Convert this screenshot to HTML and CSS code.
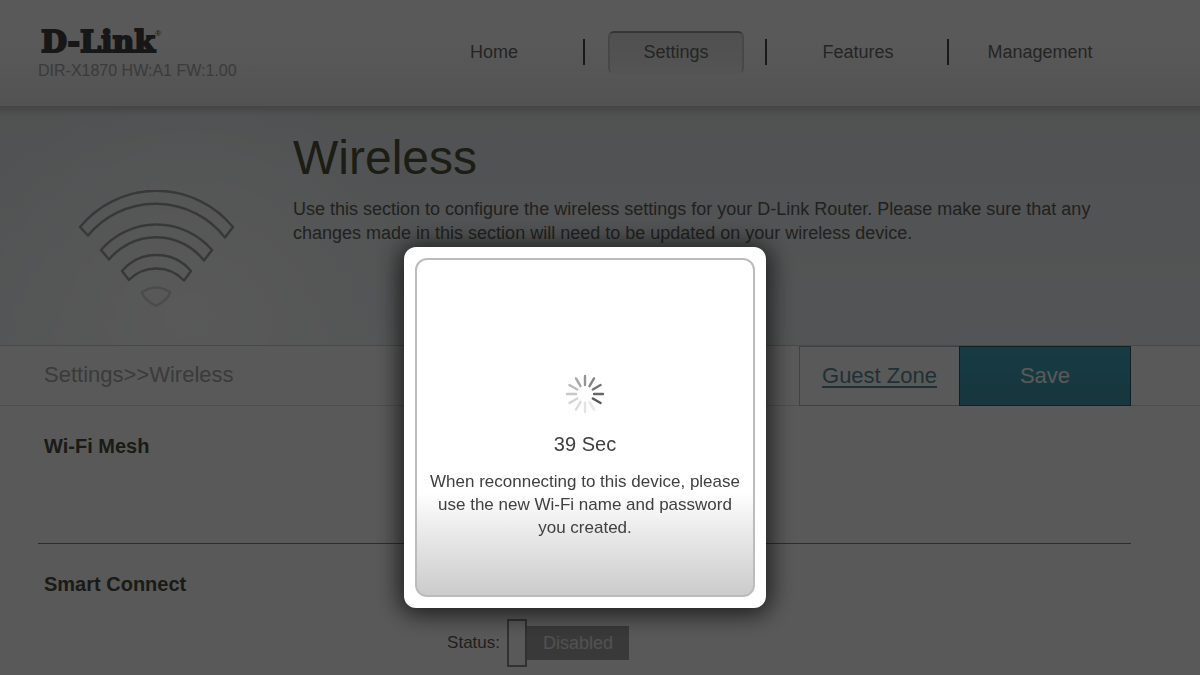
FILE: index.html
```
<!DOCTYPE html>
<html lang="en">
<head>
<meta charset="utf-8">
<meta name="viewport" content="width=device-width, initial-scale=1">
<title>D-Link - Wireless</title>
<link rel="stylesheet" href="styles.css">
</head>
<body>
<div class="page">
  <header class="header">
    <div class="brand">
      <div class="logo">D-Link<sup class="logo-mark">®</sup></div>
      <div class="model">DIR-X1870 HW:A1 FW:1.00</div>
    </div>
    <nav class="nav">
      <div class="nav-item"><a class="nav-link" href="#home">Home</a></div>
      <div class="nav-item"><a class="nav-link nav-link-active" href="#settings">Settings</a></div>
      <div class="nav-item"><a class="nav-link" href="#features">Features</a></div>
      <div class="nav-item"><a class="nav-link" href="#management">Management</a></div>
    </nav>
  </header>

  <section class="hero">
    <svg class="wifi" viewBox="0 0 156 124" fill="none" stroke="#a2a2a2" stroke-width="2.500" stroke-linejoin="round" aria-hidden="true">
      <path d="M2 37A99 99 0 0 1 155 37L147 47.500A88 88 0 0 0 10 45.500Z"/>
      <path d="M23 60A73 73 0 0 1 134 60L126 70.500A61 61 0 0 0 31 69.500Z"/>
      <path d="M44 81A45 45 0 0 1 113 81L106 90.500A38 38 0 0 0 51 90Z"/>
      <path d="M64 102Q78 93 92 102Q91 109 78 116Q65 109 64 102Z" stroke="#d8d8d8"/>
    </svg>
    <div class="hero-text">
      <h1 class="title">Wireless</h1>
      <p class="intro">Use this section to configure the wireless settings for your D-Link Router. Please make sure that any changes made in this section will need to be updated on your wireless device.</p>
    </div>
  </section>

  <div class="toolbar">
    <div class="crumbs">Settings&gt;&gt;Wireless</div>
    <div class="actions">
      <div class="guest"><a class="guest-link" href="#guest">Guest Zone</a></div>
      <button class="save" type="button">Save</button>
    </div>
  </div>

  <main class="content">
    <section class="section section-mesh">
      <h2 class="section-title">Wi-Fi Mesh</h2>
    </section>
    <section class="section">
      <h2 class="section-title">Smart Connect</h2>
      <div class="field">
        <label class="field-label" for="smart">Status:</label>
        <div class="switch">
          <input class="switch-handle" id="smart" type="checkbox">
          <span class="switch-track">Disabled</span>
        </div>
      </div>
    </section>
  </main>
</div>

<div class="overlay">
  <div class="dialog" role="dialog" aria-modal="true" aria-label="Please wait">
    <div class="dialog-body">
      <svg class="spinner" viewBox="-20 -20 40 40" stroke-width="2.400" stroke-linecap="round" aria-hidden="true">
        <path d="M0-9V-18" stroke="#949494"/>
        <path d="M0-9V-18" stroke="#848484" transform="rotate(30)"/>
        <path d="M0-9V-18" stroke="#747474" transform="rotate(60)"/>
        <path d="M0-9V-18" stroke="#666" transform="rotate(90)"/>
        <path d="M0-9V-18" stroke="#585858" transform="rotate(120)"/>
        <path d="M0-9V-18" stroke="#e8e8e8" transform="rotate(150)"/>
        <path d="M0-9V-18" stroke="#e2e2e2" transform="rotate(180)"/>
        <path d="M0-9V-18" stroke="#dcdcdc" transform="rotate(210)"/>
        <path d="M0-9V-18" stroke="#d4d4d4" transform="rotate(240)"/>
        <path d="M0-9V-18" stroke="#c8c8c8" transform="rotate(270)"/>
        <path d="M0-9V-18" stroke="#bababa" transform="rotate(300)"/>
        <path d="M0-9V-18" stroke="#a6a6a6" transform="rotate(330)"/>
      </svg>
      <div class="countdown">39 Sec</div>
      <p class="notice">When reconnecting to this device, please use the new Wi-Fi name and password you created.</p>
    </div>
  </div>
</div>
</body>
</html>
```
FILE: styles.css
```
* { box-sizing: border-box; }

body {
  margin: 0;
  background: #fff;
  color: #5c5c54;
  font-family: "Liberation Sans", Arial, sans-serif;
  font-size: 18px;
  line-height: 24px;
}

.page {
  height: 100vh;
  overflow: hidden;
}

h1, h2, p { margin: 0; }

.header {
  display: flex;
  justify-content: space-between;
  height: 106px;
  padding: 0 69px 0 38px;
  background: linear-gradient(#fff 40%, #ececec);
}

.brand { padding-top: 26px; }

.logo {
  padding-left: 3px;
  color: #444;
  font: bold 30px/32px "DejaVu Serif", serif;
  -webkit-text-stroke: 2px #444;
}

.logo-mark {
  font: 8px/8px "Liberation Sans", sans-serif;
  vertical-align: 16px;
  -webkit-text-stroke: 0;
}

.model {
  padding-top: 1px;
  color: #a8a8a8;
  font-size: 16px;
}

.nav {
  display: flex;
  align-items: flex-start;
  padding-top: 31px;
}

.nav-item {
  position: relative;
  display: flex;
  justify-content: center;
  width: 182px;
}

.nav-item + .nav-item::before {
  content: "";
  position: absolute;
  left: -2px;
  top: 8px;
  width: 2px;
  height: 26px;
  background: #484848;
}

.nav-link {
  width: 136px;
  border: 2px solid transparent;
  border-radius: 6px;
  color: #6a6a6a;
  line-height: 39px;
  text-align: center;
  text-decoration: none;
}

.nav-link-active {
  border-color: #989898 #ccc #f0f0f0;
  background: linear-gradient(#e4e4e4, #f0f0f0);
}

.hero {
  display: grid;
  grid-template-columns: 255px 1fr;
  height: 239px;
  padding: 0 69px 0 38px;
  background:
    linear-gradient(#c4c4c4, rgba(208, 208, 208, 0) 10px),
    radial-gradient(circle at 190px 210px, #fff, rgba(255, 255, 255, 0) 240px),
    linear-gradient(#e6eaec, #eef2f4);
}

.wifi {
  width: 156px;
  height: 124px;
  margin: 84px 0 0 40px;
}

.title {
  padding-top: 24px;
  color: #50533a;
  font-size: 48px;
  font-weight: normal;
  line-height: 56px;
}

.intro {
  padding-top: 11px;
  color: #5e605a;
}

.toolbar {
  display: flex;
  justify-content: space-between;
  height: 61px;
  padding: 0 69px 0 44px;
  border-top: 1px solid #c8cfd2;
  border-bottom: 1px solid #dadfe0;
  font-size: 22px;
  line-height: 58px;
}

.crumbs { color: #a8a8a8; }

.actions {
  display: flex;
  margin-bottom: -1px;
}

.guest {
  width: 160px;
  border: 1px solid #b4bcc0;
  border-right: 0;
  text-align: center;
}

.guest-link {
  color: #5c8c98;
  text-underline-offset: 3px;
}

.save {
  width: 172px;
  padding: 0;
  border: 1px solid #305a66;
  background: linear-gradient(#44aac2, #449ab0);
  color: #fff;
  font: inherit;
}

.content { padding: 0 69px 0 38px; }

.section { padding: 28px 6px 0; }

.section-mesh {
  height: 138px;
  border-bottom: 1px solid #808080;
}

.section-title {
  color: #4c4e40;
  font-size: 20px;
  line-height: 24px;
}

.field {
  display: grid;
  grid-template-columns: 456px auto;
  align-items: center;
  justify-content: start;
  column-gap: 7px;
  padding-top: 23px;
}

.field-label {
  font-size: 17px;
  text-align: right;
}

.switch {
  display: flex;
  align-items: center;
}

.switch-handle {
  width: 20px;
  height: 48px;
  margin: 0;
  border: 2px solid #8c8c8c;
  background: #fff;
  appearance: none;
}

.switch-track {
  width: 102px;
  height: 34px;
  background: #a4a4a4;
  color: #e8e8e8;
  line-height: 34px;
  text-align: center;
}

.overlay {
  position: fixed;
  inset: 0;
  display: flex;
  align-items: flex-start;
  justify-content: center;
  padding: 247px 30px 0 0;
  background: rgba(0, 0, 0, 0.65);
}

.dialog {
  width: 362px;
  padding: 11px;
  border-radius: 12px;
  background: #fff;
  box-shadow: 0 2px 24px 4px rgba(0, 0, 0, 0.7);
}

.dialog-body {
  display: flex;
  flex-direction: column;
  align-items: center;
  min-height: 339px;
  padding: 114px 8px 0;
  border: 2px solid #bcbcbc;
  border-radius: 12px;
  background: linear-gradient(#fff 69%, #ececec 80%, #cbcbcb);
  color: #404040;
  text-align: center;
}

.spinner {
  width: 40px;
  height: 40px;
}

.countdown {
  padding-top: 18px;
  font-size: 20px;
}

.notice {
  padding-top: 14px;
  font-size: 17px;
  line-height: 23px;
}
```
